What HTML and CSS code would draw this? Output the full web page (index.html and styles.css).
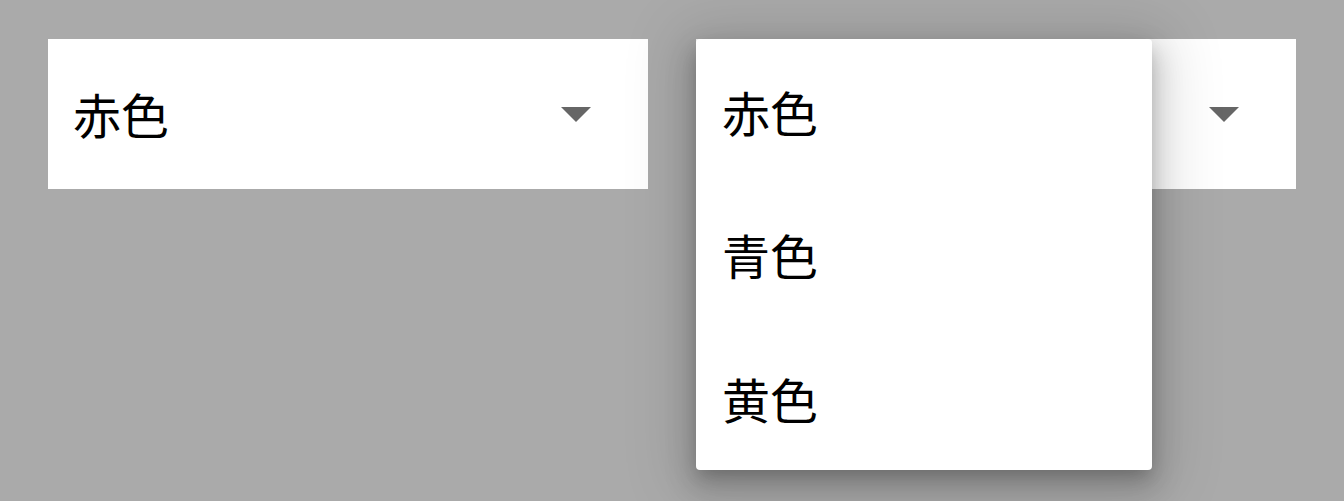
FILE: index.html
```html
<!DOCTYPE html>
<html lang="ja">
<head>
<meta charset="utf-8">
<link rel="stylesheet" href="styles.css">
</head>
<body>
<div class="row">
  <div class="select">
    <span class="value">赤色</span>
    <span class="arrow"></span>
  </div>
  <div class="select-wrap">
    <div class="select">
      <span class="value">赤色</span>
      <span class="arrow"></span>
    </div>
    <ul class="menu">
      <li class="item">赤色</li>
      <li class="item">青色</li>
      <li class="item">黄色</li>
    </ul>
  </div>
</div>
</body>
</html>
```
FILE: styles.css
```css
html, body {
  margin: 0;
  padding: 0;
  background: #aaaaaa;
  font-family: "Noto Sans CJK JP", "Noto Sans", sans-serif;
  color: #000;
}
body {
  min-height: 501px;
}
.row {
  display: flex;
  align-items: flex-start;
  gap: 48px;
  padding: 39px 48px 0 48px;
}
.select-wrap {
  position: relative;
  height: 431px;
}
.select {
  width: 600px;
  height: 150px;
  background: #fff;
  display: flex;
  align-items: center;
  box-sizing: border-box;
  padding-left: 25px;
  position: relative;
}
.value {
  font-size: 48px;
  line-height: 1;
  margin-top: -2px;
}
.arrow {
  position: absolute;
  left: 513px;
  top: 68px;
  width: 0;
  height: 0;
  border-left: 15px solid transparent;
  border-right: 15px solid transparent;
  border-top: 15px solid #666;
}
.menu {
  position: absolute;
  z-index: 2;
  left: 0;
  top: 0;
  width: 456px;
  height: 431px;
  margin: 0;
  padding: 0;
  list-style: none;
  background: #fff;
  border-radius: 4px;
  box-shadow: 0 15px 28px 6px rgba(0,0,0,0.14), 0 6px 60px 18px rgba(0,0,0,0.12), 0 8px 16px -4px rgba(0,0,0,0.2);
}
.item {
  height: 144px;
  display: flex;
  align-items: center;
  padding-left: 26px;
  font-size: 48px;
  line-height: 1;
}
.item:first-child {
  height: 143px;
}
```
